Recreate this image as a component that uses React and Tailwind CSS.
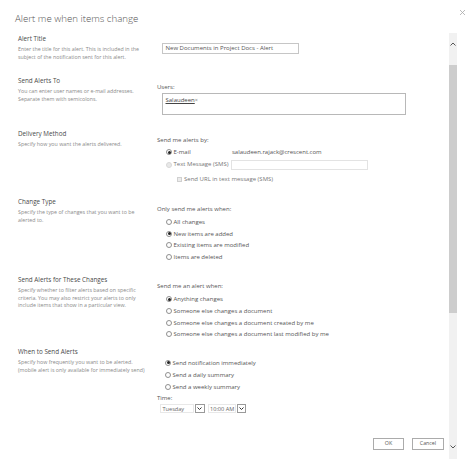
import React from 'react';

const Radio = ({ checked, disabled }) => (
  <span
    className={
      disabled
        ? 'w-[6px] h-[6px] rounded-full border border-[#d8d8d8] bg-[#e8e8e8] shrink-0'
        : 'w-[6px] h-[6px] rounded-full border border-[#909090] bg-white flex items-center justify-center shrink-0'
    }
  >
    {checked && <span className="w-[3px] h-[3px] rounded-full bg-[#222]" />}
  </span>
);

const Option = ({ label, checked, className = 'h-[11.7px] ml-[9px]' }) => (
  <div className={`flex items-center gap-[1.5px] ${className}`}>
    <Radio checked={checked} />
    <span className="text-[6px] leading-[8px] text-[#555] whitespace-nowrap">{label}</span>
  </div>
);

const Section = ({ title, children, desc, height, right }) => (
  <div className={`flex ${height}`}>
    <div className="w-[157px] shrink-0 pl-[18px] pr-[10px]">
      <div className="text-[6.3px] leading-[8px] text-[#4a4a4a]">{title}</div>
      <div className="mt-[3px] text-[5.3px] leading-[7.5px] text-[#8a8a8a]">{desc}</div>
    </div>
    <div className={`flex-1 flex flex-col ${right}`}>{children}</div>
  </div>
);

const Chevron = ({ up }) => (
  <svg width="6" height="4" viewBox="0 0 6 4" className="block">
    <path
      d={up ? 'M0.5 3.5 L3 1 L5.5 3.5' : 'M0.5 0.5 L3 3 L5.5 0.5'}
      fill="none"
      stroke="#555"
      strokeWidth="1"
    />
  </svg>
);

const SelectBox = ({ value, width }) => (
  <div className="flex items-center h-[9.5px]">
    <div className={`${width} h-full border border-[#e8e8e8] flex items-center pl-[1.5px] text-[5.6px] text-[#666]`}>
      {value}
    </div>
    <div className="w-[9.5px] h-full border border-[#9a9a9a] flex items-center justify-center ml-[1px]">
      <svg width="5" height="3" viewBox="0 0 5 3">
        <path d="M0.5 0.5 L2.5 2.5 L4.5 0.5" fill="none" stroke="#333" strokeWidth="1" />
      </svg>
    </div>
  </div>
);

export default function App() {
  return (
    <div className="w-[474px] h-[462px] bg-white flex flex-col overflow-hidden font-['Open_Sans',sans-serif] text-[#444]">
      {/* Header */}
      <div className="h-[33px] flex items-start justify-between pl-[15px] pr-[9px] pt-[10px]">
        <h1 className="mt-[1px] text-[9.7px] leading-[16px] font-light text-[#555]">Alert me when items change</h1>
        <svg width="5" height="5" viewBox="0 0 5 5">
          <path d="M0 0 L5 5 M5 0 L0 5" stroke="#aaa" strokeWidth="0.8" />
        </svg>
      </div>

      <div className="flex">
        <div className="w-[449px] h-[429px] flex flex-col pt-[2px]">
          {/* Alert Title */}
          <Section
            title="Alert Title"
            desc="Enter the title for this alert. This is included in the subject of the notification sent for this alert."
            height="h-[42px]"
            right="pt-[8px]"
          >
            <div className="ml-[5px] w-[137px] h-[11px] border border-[#c6c6c6] flex items-center pl-[2.5px] text-[6px] text-[#555] whitespace-nowrap">
              New Documents in Project Docs - Alert
            </div>
          </Section>

          {/* Send Alerts To */}
          <Section
            title="Send Alerts To"
            desc="You can enter user names or e-mail addresses. Separate them with semicolons."
            height="h-[53px]"
            right="pt-[6px]"
          >
            <div className="text-[6px] leading-[8px] text-[#555]">Users:</div>
            <div className="mt-[1.5px] ml-[5px] w-[244px] h-[22px] border border-[#b8b8b8] pl-[2.5px] pt-[2.5px] text-[6px] leading-[8px]">
              <span className="underline text-[#444]">Salaudeen</span>
              <span className="text-[#777] text-[5.5px]">×</span>
            </div>
          </Section>

          {/* Delivery Method */}
          <Section
            title="Delivery Method"
            desc="Specify how you want the alerts delivered."
            height="h-[68px]"
            right="pt-[6px]"
          >
            <div className="text-[6px] leading-[8px] text-[#555]">Send me alerts by:</div>
            <div className="mt-[2px] h-[12px] grid grid-cols-[75px_auto] items-center">
              <div className="pl-[9px] flex items-center gap-[1.5px]">
                <Radio checked />
                <span className="text-[6px] text-[#555]">E-mail</span>
              </div>
              <span className="text-[6px] text-[#555] whitespace-nowrap">salaudeen.rajack@crescent.com</span>
            </div>
            <div className="h-[13px] grid grid-cols-[74px_auto] items-center">
              <div className="pl-[9px] flex items-center gap-[1.5px] overflow-visible">
                <Radio disabled />
                <span className="text-[6px] text-[#777] whitespace-nowrap">Text Message (SMS)</span>
              </div>
              <div className="w-[137px] h-[10px] border border-[#e3e3e3]" />
            </div>
            <div className="mt-[2px] h-[12px] flex items-center ml-[20px] gap-[2px]">
              <span className="w-[5px] h-[5px] border border-[#d0d0d0] bg-[#ececec]" />
              <span className="text-[6px] text-[#777]">Send URL in text message (SMS)</span>
            </div>
          </Section>

          {/* Change Type */}
          <Section
            title="Change Type"
            desc="Specify the type of changes that you want to be alerted to."
            height="h-[78px]"
            right="pt-[7px]"
          >
            <div className="text-[6px] leading-[8px] text-[#555]">Only send me alerts when:</div>
            <div className="mt-[3px]">
              <Option label="All changes" />
              <Option label="New items are added" checked />
              <Option label="Existing items are modified" />
              <Option label="Items are deleted" />
            </div>
          </Section>

          {/* Send Alerts for These Changes */}
          <Section
            title="Send Alerts for These Changes"
            desc="Specify whether to filter alerts based on specific criteria. You may also restrict your alerts to only include items that show in a particular view."
            height="h-[72px]"
            right="pt-[5.7px]"
          >
            <div className="text-[6px] leading-[8px] text-[#555]">Send me an alert when:</div>
            <div className="mt-[3.8px]">
              <Option label="Anything changes" checked />
              <Option label="Someone else changes a document" />
              <Option label="Someone else changes a document created by me" />
              <Option label="Someone else changes a document last modified by me" />
            </div>
          </Section>

          {/* When to Send Alerts */}
          <Section
            title="When to Send Alerts"
            desc="Specify how frequently you want to be alerted. (mobile alert is only available for immediately send)"
            height="h-[90px]"
            right="pt-[8.5px]"
          >
            <Option label="Send notification immediately" checked className="h-[12px] ml-[8px]" />
            <Option label="Send a daily summary" className="h-[12px] ml-[8px]" />
            <Option label="Send a weekly summary" className="h-[12px] ml-[8px]" />
            <div className="mt-[1.8px] text-[6px] leading-[8px] text-[#555]">Time:</div>
            <div className="mt-[1.7px] ml-[3px] flex items-center gap-[3px]">
              <SelectBox value="Tuesday" width="w-[34px]" />
              <SelectBox value="10:00 AM" width="w-[28px]" />
            </div>
          </Section>

          {/* Footer */}
          <div className="flex justify-end gap-[8px] pr-[5px]">
            <button className="w-[31px] h-[12px] border border-[#ababab] bg-white text-[5.3px] text-[#555] flex items-center justify-center">
              OK
            </button>
            <button className="w-[32px] h-[12px] border border-[#ababab] bg-white text-[5.3px] text-[#555] flex items-center justify-center">
              Cancel
            </button>
          </div>
        </div>

        {/* Scrollbar */}
        <div className="w-[8px] h-[426px] bg-[#f1f1f1] flex flex-col">
          <div className="h-[32px] flex items-start justify-center pt-[9px]">
            <Chevron up />
          </div>
          <div className="h-[248px] bg-[#cdcdcd]" />
          <div className="flex-1 flex items-end justify-center pb-[10px]">
            <Chevron />
          </div>
        </div>
      </div>
    </div>
  );
}
